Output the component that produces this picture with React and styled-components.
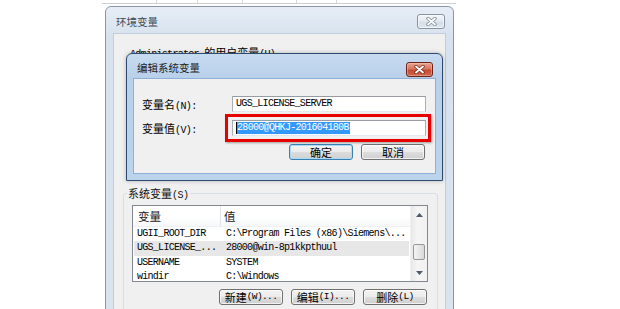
import styled, { createGlobalStyle } from 'styled-components';

const mono = `"Liberation Mono", "Noto Sans CJK SC", monospace`;
const han = `"Noto Sans CJK SC", "Liberation Sans", sans-serif`;

const GlobalStyle = createGlobalStyle`
  html, body {
    margin: 0;
    padding: 0;
    background: #fff;
  }
  body {
    font-family: ${han};
    color: #000;
  }
  * {
    box-sizing: border-box;
  }
`;

const Desktop = styled.div`
  position: relative;
  width: 620px;
  height: 309px;
  overflow: hidden;
  background: #fff;
`;

const TopEdge = styled.div`
  display: flex;
  margin-left: 102px;
  width: 354px;
  height: 4px;
  border-bottom: 1px solid #cfcfcf;
`;

const EdgeCell = styled.div`
  width: ${p => p.$w}px;
  border-right: 1px solid #d8d8d8;
`;

/* ---------- outer window (inactive) ---------- */

const Window = styled.div`
  margin: 2px 0 0 105px;
  width: 349px;
  height: 320px;
  padding: 0 7px;
  border: 1px solid #8797a9;
  border-radius: 6px 6px 0 0;
  background: linear-gradient(#e6edf5, #d7e2ee 30px, #dae4ef);
  display: flex;
  flex-direction: column;
`;

const TitleBar = styled.div`
  height: ${p => p.$h}px;
  flex: none;
  display: flex;
  justify-content: space-between;
  align-items: flex-start;
`;

const Title = styled.div`
  font-family: ${han};
  font-size: 10.5px;
  line-height: 14px;
  padding: ${p => p.$pt}px 0 0 ${p => p.$pl}px;
  color: ${p => (p.$active ? '#1b1b1b' : '#3f4a56')};
`;

const CloseButton = styled.div`
  width: ${p => p.$w}px;
  height: 15px;
  margin: ${p => p.$mt}px ${p => p.$mr}px 0 0;
  border-radius: 3px;
  display: flex;
  align-items: center;
  justify-content: center;
  border: 1px solid ${p => (p.$active ? '#6b2417' : '#8593a3')};
  background: ${p =>
    p.$active
      ? 'linear-gradient(#e7a797, #d8755f 45%, #c54a32 55%, #cf6a4f)'
      : 'linear-gradient(#f4f6f9, #e4eaf0 45%, #d6dee7 55%, #dfe6ee)'};
  box-shadow: inset 0 0 0 1px ${p => (p.$active ? 'rgba(255,200,180,0.45)' : 'rgba(255,255,255,0.6)')};
`;

const CloseGlyph = ({ outline }) => (
  <svg width="11" height="9" viewBox="0 0 11 9">
    <path d="M2 1.5 L9 7.5 M9 1.5 L2 7.5" stroke={outline} strokeWidth="3.4" strokeLinecap="round" />
    <path d="M2 1.5 L9 7.5 M9 1.5 L2 7.5" stroke="#fff" strokeWidth="1.8" strokeLinecap="round" />
  </svg>
);

const Client = styled.div`
  flex: 1;
  background: #f0f0f0;
  border: 1px solid #bfcddc;
  border-bottom: none;
  display: flex;
  flex-direction: column;
`;

const SectionLabel = styled.div`
  font-family: ${mono};
  font-size: 10px;
  letter-spacing: -0.7px;
  line-height: 13px;
  height: 13px;
  margin: 12px 0 0 16px;
`;

const Han = styled.span`
  font-family: ${han};
  font-size: 11px;
  letter-spacing: 0;
`;

const UserVarsPanel = styled.div`
  height: 128px;
  flex: none;
`;

const GroupBox = styled.fieldset`
  margin: 0 7px 0 9px;
  padding: 5px 9px 12px 8px;
  border: 1px solid #d5dfe5;
  border-radius: 3px;
  min-width: 0;
`;

const GroupLegend = styled.legend`
  margin-left: -5px;
  padding: 0 1px;
  font-family: ${mono};
  font-size: 10px;
  letter-spacing: -0.5px;
  line-height: 13px;
  height: 13px;
  color: #111;
`;

const ListView = styled.div`
  height: 77px;
  border: 1px solid #828790;
  background: #fff;
  display: flex;
  overflow: hidden;
`;

const Table = styled.div`
  flex: 1;
  display: flex;
  flex-direction: column;
  overflow: hidden;
`;

const HeaderRow = styled.div`
  height: 21px;
  flex: none;
  display: grid;
  grid-template-columns: 88px 1fr;
  background: linear-gradient(#ffffff, #ffffff 60%, #f6f7f9);
  border-bottom: 1px solid #eef0f3;
`;

const HeaderCell = styled.div`
  font-family: ${han};
  font-size: 11.5px;
  line-height: 20px;
  padding-left: ${p => p.$pl}px;
  border-right: ${p => (p.$divider ? '1px solid #e3e5e8' : 'none')};
  color: #1a1a1a;
`;

const Row = styled.div`
  height: 14.3px;
  flex: none;
  display: grid;
  grid-template-columns: 88px 1fr;
  margin: 0 1px;
  background: ${p => (p.$selected ? '#e7e7e7' : 'transparent')};
`;

const Cell = styled.div`
  font-family: ${mono};
  font-size: 10px;
  letter-spacing: -0.72px;
  line-height: 13.5px;
  padding-left: ${p => p.$pl}px;
  white-space: nowrap;
  overflow: hidden;
`;

const ScrollBar = styled.div`
  width: 17px;
  display: flex;
  flex-direction: column;
  background: linear-gradient(to right, #e8e8e8, #f5f5f5 40%, #f1f1f1);
  border-left: 1px solid #f0f0f0;
`;

const ScrollArrow = styled.div`
  height: 17px;
  flex: none;
  display: flex;
  align-items: center;
  justify-content: center;
`;

const ScrollTrack = styled.div`
  flex: 1;
  padding: ${p => p.$offset}px 2px 0 2px;
`;

const Thumb = styled.div`
  height: ${p => p.$h}px;
  border: 1px solid #979797;
  border-radius: 2px;
  background: linear-gradient(to right, #f4f4f4, #e7e7e7 50%, #d9d9d9);
`;

const Arrow = ({ up }) => (
  <svg width="7" height="4" viewBox="0 0 7 4">
    <path d={up ? 'M0 4 L3.5 0 L7 4 Z' : 'M0 0 L3.5 4 L7 0 Z'} fill="#4e5a68" />
  </svg>
);

const ButtonRow = styled.div`
  display: flex;
  justify-content: flex-end;
  gap: 8px;
  height: 16px;
  margin: ${p => p.$mt}px ${p => p.$mr}px 0 0;
`;

const Button = styled.div`
  width: 64px;
  height: 16px;
  border: 1px solid ${p => (p.$default ? '#3c7fb1' : '#707070')};
  border-radius: 3px;
  background: linear-gradient(#f3f3f3, #ebebeb 50%, #dddddd 50%, #d0d0d0);
  box-shadow: inset 0 0 0 1px ${p => (p.$default ? '#a8dcf8' : 'rgba(255,255,255,0.7)')};
  display: flex;
  align-items: center;
  justify-content: center;
  font-family: ${mono};
  font-size: 9.5px;
  letter-spacing: -0.6px;
  line-height: 14px;
  white-space: nowrap;
  overflow: hidden;
`;

/* ---------- edit dialog (active, floats above) ---------- */

const Dialog = styled.div`
  position: absolute;
  left: 126px;
  top: 53px;
  width: 317px;
  height: 128px;
  padding: 0 6px 6px;
  border: 1px solid #2d4b70;
  border-radius: 6px 6px 0 0;
  background: linear-gradient(#c7dbf0, #b9d0ea 24px, #bcd3ec);
  box-shadow: 0 0 4px rgba(0, 0, 0, 0.25);
  display: flex;
  flex-direction: column;
`;

const DialogClient = styled.div`
  flex: 1;
  background: #f0f0f0;
  border: 1px solid #8fb0d6;
  padding-top: 17px;
`;

const FieldRow = styled.div`
  display: grid;
  grid-template-columns: 90px 194px;
  align-items: center;
  height: 16px;
  padding-left: 8px;
  margin-bottom: 8px;
`;

const FieldLabel = styled.div`
  font-family: ${mono};
  font-size: 10px;
  letter-spacing: -0.6px;
  line-height: 16px;
  height: 16px;
`;

const FieldBox = styled.div`
  position: relative;
  height: 16px;
`;

const TextInput = styled.div`
  height: 16px;
  border: 1px solid #abadb3;
  border-top-color: #9a9ca3;
  border-bottom-color: #e3e9ef;
  background: #fff;
  padding-left: 3px;
  font-family: ${mono};
  font-size: 10px;
  letter-spacing: -0.68px;
  line-height: 14px;
  white-space: nowrap;
`;

const Selection = styled.span`
  display: inline-block;
  background: #3399ff;
  color: #fff;
  line-height: 12px;
  margin-top: 1px;
  border-left: 1px solid #000;
  padding-right: 1px;
`;

const RedMark = styled.div`
  position: absolute;
  inset: -6px -5px -6px -7px;
  border: 3px solid #e60000;
  box-shadow: 1px 1px 2px rgba(0, 0, 0, 0.35);
  pointer-events: none;
`;

const rows = [
  ['UGII_ROOT_DIR', 'C:\\Program Files (x86)\\Siemens\\...'],
  ['UGS_LICENSE_...', '28000@win-8p1kkpthuul'],
  ['USERNAME', 'SYSTEM'],
  ['windir', 'C:\\Windows'],
];

export default function App() {
  return (
    <>
      <GlobalStyle />
      <Desktop>
        <TopEdge>
          <EdgeCell $w={55} />
          <EdgeCell $w={41} />
          <EdgeCell $w={45} />
          <EdgeCell $w={54} />
          <EdgeCell $w={40} />
        </TopEdge>

        <Window>
          <TitleBar $h={26}>
            <Title $pt={8} $pl={3}>环境变量</Title>
            <CloseButton $w={28} $mt={7} $mr={1}>
              <CloseGlyph outline="#7d8a98" />
            </CloseButton>
          </TitleBar>
          <Client>
            <SectionLabel>
              Administrator <Han>的用户变量</Han>(U)
            </SectionLabel>
            <UserVarsPanel />
            <GroupBox>
              <GroupLegend>
                <Han>系统变量</Han>(S)
              </GroupLegend>
              <ListView>
                <Table>
                  <HeaderRow>
                    <HeaderCell $pl={5} $divider>变量</HeaderCell>
                    <HeaderCell $pl={3}>值</HeaderCell>
                  </HeaderRow>
                  {rows.map(([name, value], i) => (
                    <Row key={name} $selected={i === 1}>
                      <Cell $pl={3}>{name}</Cell>
                      <Cell $pl={4}>{value}</Cell>
                    </Row>
                  ))}
                </Table>
                <ScrollBar>
                  <ScrollArrow>
                    <Arrow up />
                  </ScrollArrow>
                  <ScrollTrack $offset={21}>
                    <Thumb $h={16} />
                  </ScrollTrack>
                  <ScrollArrow>
                    <Arrow />
                  </ScrollArrow>
                </ScrollBar>
              </ListView>
              <ButtonRow $mt={7} $mr={1}>
                <Button><Han>新建</Han>(W)...</Button>
                <Button><Han>编辑</Han>(I)...</Button>
                <Button><Han>删除</Han>(L)</Button>
              </ButtonRow>
            </GroupBox>
          </Client>
        </Window>

        <Dialog>
          <TitleBar $h={24}>
            <Title $pt={7} $pl={4} $active>编辑系统变量</Title>
            <CloseButton $w={27} $mt={8} $mr={3} $active>
              <CloseGlyph outline="#7a2a1c" />
            </CloseButton>
          </TitleBar>
          <DialogClient>
            <FieldRow>
              <FieldLabel><Han>变量名</Han>(N):</FieldLabel>
              <FieldBox>
                <TextInput>UGS_LICENSE_SERVER</TextInput>
              </FieldBox>
            </FieldRow>
            <FieldRow>
              <FieldLabel><Han>变量值</Han>(V):</FieldLabel>
              <FieldBox>
                <TextInput>
                  <Selection>28000@QHKJ-201604180B</Selection>
                </TextInput>
                <RedMark />
              </FieldBox>
            </FieldRow>
            <ButtonRow $mt={6} $mr={10}>
              <Button $default><Han>确定</Han></Button>
              <Button><Han>取消</Han></Button>
            </ButtonRow>
          </DialogClient>
        </Dialog>
      </Desktop>
    </>
  );
}
